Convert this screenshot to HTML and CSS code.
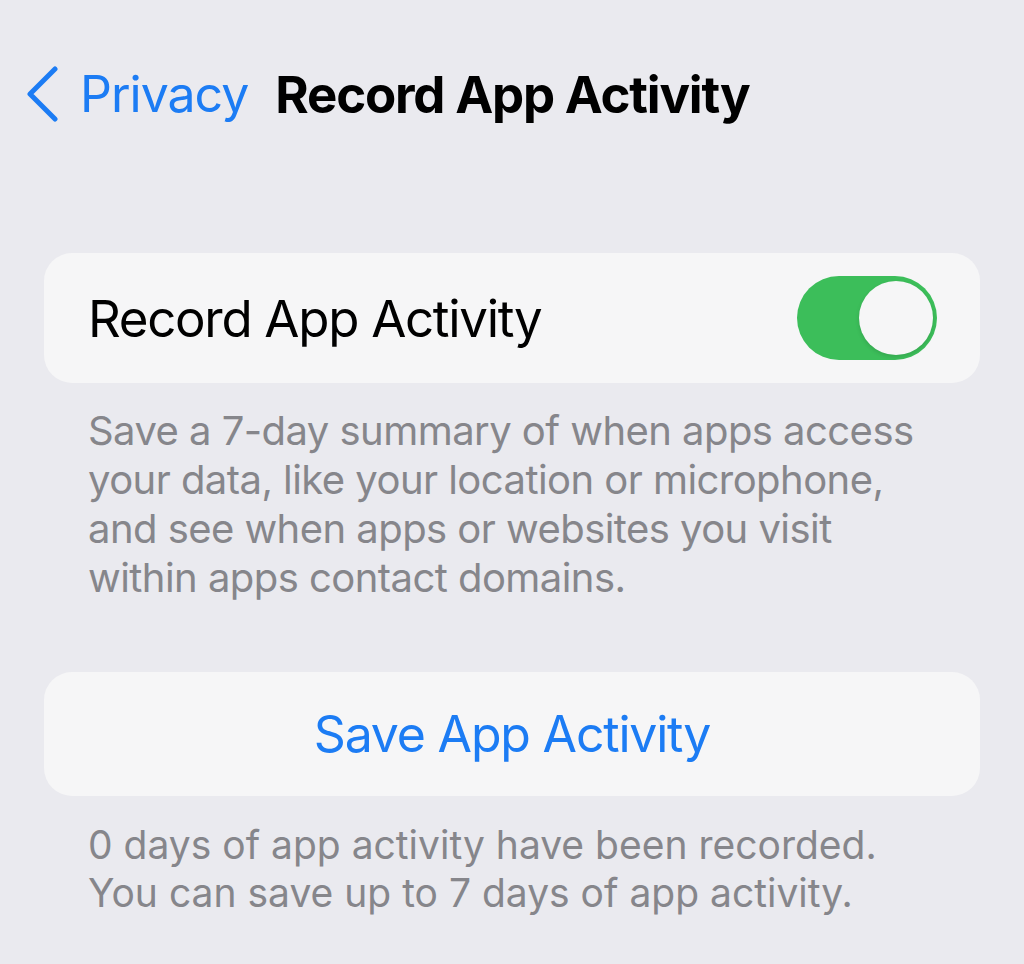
FILE: index.html
```html
<!DOCTYPE html>
<html lang="en">
<head>
    <meta charset="UTF-8">
    <meta name="viewport" content="width=device-width, initial-scale=1.0">
    <title>Record App Activity</title>
    <link rel="stylesheet" href="styles.css">
</head>
<body>
    <header class="nav">
        <a class="back" href="#">
            <svg class="chevron" width="32" height="56" viewBox="0 0 32 56">
                <path d="M29 3 L4 28 L29 53" fill="none" stroke="#1c7cf4" stroke-width="5" stroke-linecap="round" stroke-linejoin="round"/>
            </svg>
            <span class="back-label">Privacy</span>
        </a>
        <h1 class="title">Record App Activity</h1>
    </header>

    <section class="card toggle-card">
        <span class="row-label">Record App Activity</span>
        <span class="switch on"><span class="knob"></span></span>
    </section>
    <p class="note note-desc">
        Save a 7-day summary of when apps access<br>
        your data, like your location or microphone,<br>
        and see when apps or websites you visit<br>
        within apps contact domains.
    </p>

    <section class="card button-card">
        <span class="action">Save App Activity</span>
    </section>
    <p class="note note-foot">
        0 days of app activity have been recorded.<br>
        You can save up to 7 days of app activity.
    </p>
</body>
</html>
```

FILE: styles.css
```css
body {
    margin: 0;
    background: #eaeaef;
    font-family: Inter, "Noto Sans", sans-serif;
    color: #000;
}
.nav {
    display: flex;
    align-items: center;
    height: 70px;
    padding: 59px 0 0 26px;
}
.back {
    display: flex;
    align-items: center;
    gap: 22px;
    text-decoration: none;
    color: #1c7cf4;
}
.chevron {
    display: block;
}
.back-label {
    font-size: 50px;
    letter-spacing: -1px;
}
.title {
    margin: 0 0 0 27px;
    font-size: 51px;
    font-weight: 700;
    letter-spacing: -1.2px;
}
.card {
    margin: 0 44px;
    background: #f6f6f7;
    border-radius: 28px;
    display: flex;
    align-items: center;
}
.toggle-card {
    margin-top: 124px;
    height: 130px;
    padding: 0 43px 0 44px;
    justify-content: space-between;
}
.row-label {
    font-size: 51px;
    letter-spacing: -1.3px;
}
.switch {
    position: relative;
    width: 140px;
    height: 84px;
    border-radius: 42px;
    background: #3cbe5a;
}
.switch .knob {
    position: absolute;
    top: 5px;
    right: 4px;
    width: 74px;
    height: 74px;
    border-radius: 50%;
    background: #f6f6f7;
    box-shadow: 0 2px 4px rgba(0,0,0,0.12);
}
.note {
    margin: 0;
    padding: 0 46px 0 88px;
    color: #86868b;
    white-space: nowrap;
}
.note-desc {
    padding-top: 23px;
    font-size: 40px;
    line-height: 49px;
    letter-spacing: -0.55px;
}
.button-card {
    margin-top: 70px;
    height: 124px;
    justify-content: center;
}
.action {
    font-size: 50px;
    color: #1c7cf4;
    letter-spacing: -1.2px;
}
.note-foot {
    padding-top: 25px;
    font-size: 39px;
    line-height: 48px;
    letter-spacing: 0;
}
```
